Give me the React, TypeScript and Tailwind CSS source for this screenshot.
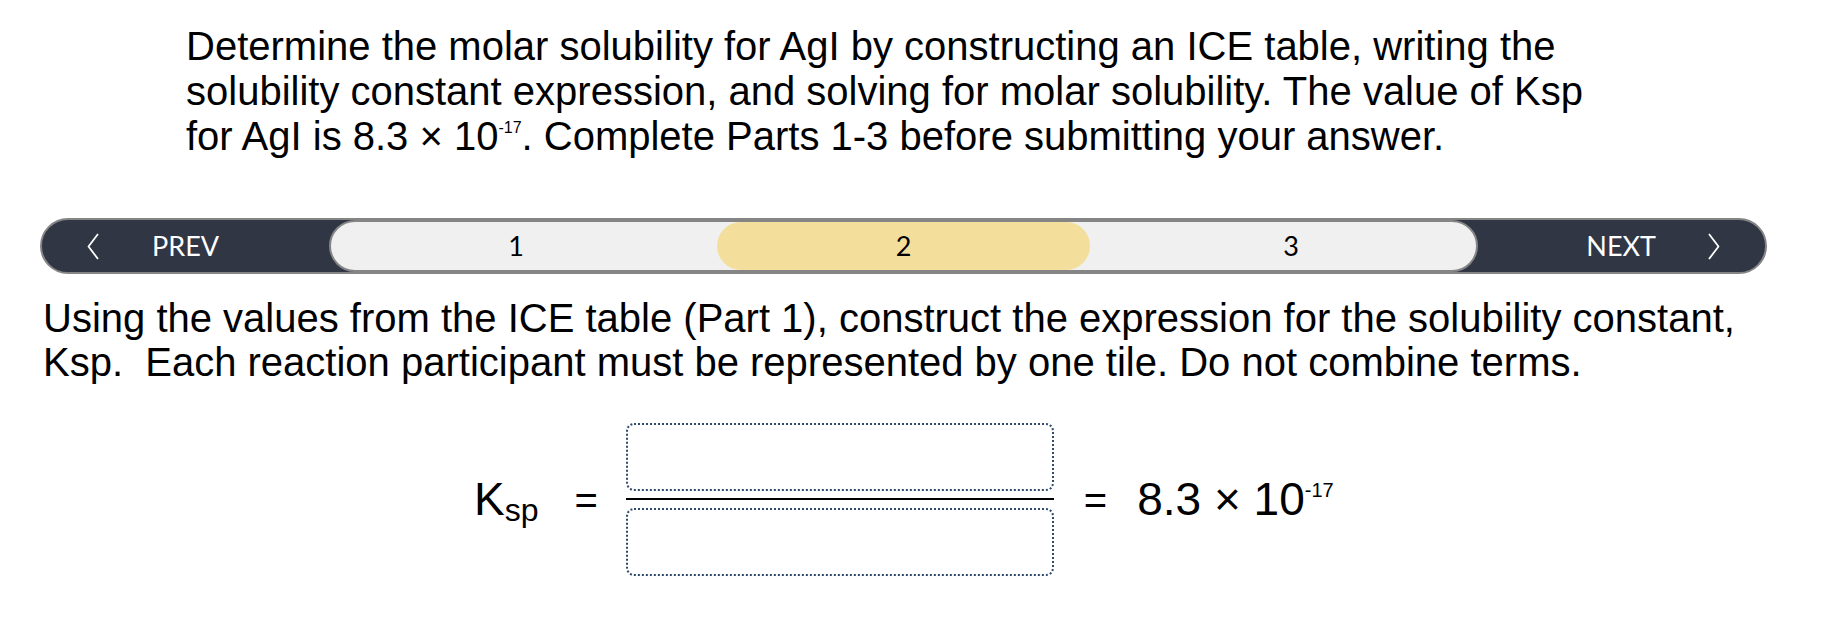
import * as React from "react";

function Chevron({ dir }: { dir: "left" | "right" }) {
  return (
    <svg width="12" height="27" viewBox="0 0 12 27" fill="none">
      <polyline
        points={dir === "left" ? "11,1 1.5,13.5 11,26" : "1,1 10.5,13.5 1,26"}
        stroke="white"
        strokeWidth="1.8"
        strokeLinejoin="round"
      />
    </svg>
  );
}

function Tile() {
  return (
    <div className="h-[68px] w-[428px] rounded-[8px] border-2 border-dotted border-[#2f4a6b]" />
  );
}

export default function App() {
  const steps = ["1", "2", "3"];
  const active = 1;

  return (
    <div className="h-[626px] w-full overflow-hidden bg-white font-['Liberation_Sans',Arial,sans-serif] text-black">
      {/* Question */}
      <p className="pl-[186px] pt-[24px] text-[40px] leading-[45px]">
        Determine the molar solubility for AgI by constructing an ICE table, writing the
        <br />
        solubility constant expression, and solving for molar solubility. The value of Ksp
        <br />
        for AgI is 8.3 × 10<span className="align-[17px] text-[16px] leading-none">-17</span>. Complete Parts 1-3 before submitting your answer.
      </p>

      {/* Step navigator */}
      <div className="ml-[40px] mt-[59px] flex h-[56px] w-[1727px] rounded-full border-2 border-[#858585] bg-[#313645] font-['Lato','Noto_Sans',sans-serif] text-[27px]">
        <button className="flex w-[287px] shrink-0 items-center gap-[53px] pl-[45px] text-white">
          <Chevron dir="left" />
          <span>PREV</span>
        </button>

        <div className="flex flex-1 rounded-full border-2 border-[#858585] bg-[#f0f0f0]">
          {steps.map((s, i) => (
            <div key={s} className={i === active ? "flex w-[405px] shrink-0" : "flex flex-1"}>
              <div
                className={
                  "flex flex-1 items-center justify-center rounded-full text-black " +
                  (i === active ? "mx-[16px] bg-[#f3de9b]" : "")
                }
              >
                {s}
              </div>
            </div>
          ))}
        </div>

        <button className="flex w-[287px] shrink-0 items-center justify-end gap-[52px] pr-[45px] text-white">
          <span>NEXT</span>
          <Chevron dir="right" />
        </button>
      </div>

      {/* Instructions */}
      <p className="pl-[43px] pt-[22px] text-[40px] leading-[44px]">
        Using the values from the ICE table (Part 1), construct the expression for the solubility constant,
        <br />
        Ksp.&nbsp; Each reaction participant must be represented by one tile. Do not combine terms.
      </p>

      {/* Ksp expression */}
      <div className="ml-[474px] mt-[39px] flex items-center">
        <div className="text-[46px]">
          K<span className="align-[-6px] text-[32px] leading-none">sp</span>
        </div>
        <div className="ml-[36px] text-[40px]">=</div>
        <div className="ml-[28px] flex flex-col">
          <Tile />
          <div className="mb-[8px] mt-[7px] h-[2px] w-[428px] bg-black" />
          <Tile />
        </div>
        <div className="ml-[30px] text-[40px]">=</div>
        <div className="ml-[30px] text-[46px]">
          8.3 × 10<span className="align-[18px] text-[20px] leading-none">-17</span>
        </div>
      </div>
    </div>
  );
}
